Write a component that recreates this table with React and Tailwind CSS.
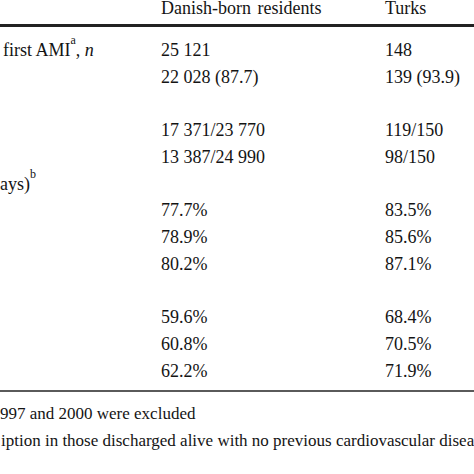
import React from "react";

const rows = [
    { label: <>first AMI<sup className="text-[12px] align-[6px]">a</sup>, <i>n</i></>, dk: "25 121", tr: "148", pl: "pl-[3px]" },
    { dk: "22 028 (87.7)", tr: "139 (93.9)" },
    {},
    { dk: "17 371/23 770", tr: "119/150" },
    { dk: "13 387/24 990", tr: "98/150" },
    { label: <>ays)<sup className="text-[12px] align-[6px]">b</sup></> },
    { dk: "77.7%", tr: "83.5%" },
    { dk: "78.9%", tr: "85.6%" },
    { dk: "80.2%", tr: "87.1%" },
    {},
    { dk: "59.6%", tr: "68.4%" },
    { dk: "60.8%", tr: "70.5%" },
    { dk: "62.2%", tr: "71.9%" },
];

export default function App() {
    return (
        <div
            className="w-[474px] h-[474px] overflow-hidden bg-white text-[#141414] text-[18px]"
            style={{ fontFamily: '"Liberation Serif", "Times New Roman", serif' }}
        >
            {/* header */}
            <div className="flex items-start h-[27px] border-b-[3px] border-[#222]">
                <div className="w-[161px]" />
                <div className="w-[224px] leading-[17px] [word-spacing:2px]">Danish-born residents</div>
                <div className="leading-[17px]">Turks</div>
            </div>

            {/* body */}
            <div className="pt-[9.5px] pb-[6px] border-b-2 border-[#5a5a5a]">
                {rows.map((r, i) => (
                    <div key={i} className="flex items-center h-[26.75px] leading-[20px] whitespace-nowrap">
                        <div className={`w-[161px] ${r.pl || ""}`}>{r.label}</div>
                        <div className="w-[224px]">{r.dk}</div>
                        <div>{r.tr}</div>
                    </div>
                ))}
            </div>

            {/* footnotes */}
            <div className="mt-[8px] text-[17px] leading-[27px] whitespace-nowrap">
                <div>997 and 2000 were excluded</div>
                <div className="pl-[1px]">iption in those discharged alive with no previous cardiovascular disease</div>
            </div>
        </div>
    );
}
